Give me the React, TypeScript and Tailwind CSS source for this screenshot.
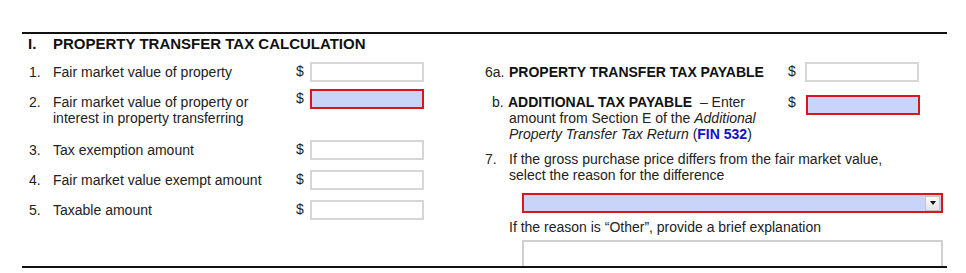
import React from 'react';

const font = { fontFamily: '"Liberation Sans", Arial, sans-serif' };

function Box({ required = false, className = '' }: { required?: boolean; className?: string }) {
  return (
    <div
      className={
        'h-[20px] w-[114px] border-2 ' +
        (required ? 'border-[#dc141c] bg-[#c9d4fb] ' : 'border-[#d6d6d6] bg-white ') +
        className
      }
    />
  );
}

function LeftRow({
  num,
  children,
  required,
  className = '',
  labelPad = 'pt-[2px]',
}: {
  num: string;
  children: React.ReactNode;
  required?: boolean;
  className?: string;
  labelPad?: string;
}) {
  return (
    <div className={'flex items-start ' + className}>
      <div className={'w-[24px] pl-[7px] box-content ' + labelPad}>{num}</div>
      <div className={'w-[243px] ' + labelPad}>{children}</div>
      <div className="w-[14px] pt-[1px]">$</div>
      <Box required={required} />
    </div>
  );
}

export default function App() {
  return (
    <div className="min-h-[273px] w-[966px] bg-white text-[14px] leading-[16px] text-[#222]" style={font}>
      <div className="h-[32px]" />
      <div className="ml-[22px] w-[925px] border-y-2 border-[#111]">
        {/* Section header */}
        <div className="flex pt-[2px] text-[15px] font-bold text-[#111]">
          <span className="w-[25px] pl-[6px] box-content">I.</span>
          <span>PROPERTY TRANSFER TAX CALCULATION</span>
        </div>

        <div className="flex">
          {/* Left column */}
          <div className="w-[448px] pt-[10px]">
            <LeftRow num="1.">Fair market value of property</LeftRow>
            <LeftRow num="2." required className="mt-[7px]" labelPad="pt-[5px]">
              Fair market value of property or
              <br />
              interest in property transferring
            </LeftRow>
            <LeftRow num="3." className="mt-[14px]">Tax exemption amount</LeftRow>
            <LeftRow num="4." className="mt-[10px]">Fair market value exempt amount</LeftRow>
            <LeftRow num="5." className="mt-[10px]">Taxable amount</LeftRow>
          </div>

          {/* Right column */}
          <div className="flex-1 pt-[10px]">
            <div className="flex items-start">
              <div className="w-[24px] pl-[15px] box-content pt-[2px]">6a.</div>
              <div className="w-[279px] pt-[2px] font-bold text-[#111]">PROPERTY TRANSFER TAX PAYABLE</div>
              <div className="w-[17px] pt-[1px]">$</div>
              <Box className="w-[113px]" />
            </div>

            <div className="mt-[12px] flex items-start">
              <div className="w-[24px] pl-[15px] box-content">
                <span className="pl-[7px]">b.</span>
              </div>
              <div className="w-[279px]">
                <span className="-ml-[1px] font-bold text-[#111]">ADDITIONAL TAX PAYABLE</span>
                <span>&nbsp; – Enter</span>
                <br />
                amount from Section E of the <i>Additional</i>
                <br />
                <i>Property Transfer Tax Return</i> (
                <span className="font-bold text-[#1010c8]">FIN 532</span>)
              </div>
              <div className="w-[18px]">$</div>
              <Box required className="mt-[1px] w-[112px]" />
            </div>

            <div className="mt-[9px] flex items-start">
              <div className="w-[24px] pl-[15px] box-content">7.</div>
              <div>
                If the gross purchase price differs from the fair market value,
                <br />
                select the reason for the difference
              </div>
            </div>

            <div className="ml-[52px] mt-[10px] flex h-[20px] w-[421px] items-center justify-end border-2 border-[#dc141c] bg-[#c9d4fb] pr-[1px]">
              <div className="flex h-[15px] w-[15px] items-center justify-center border border-[#c4c4c4] bg-gradient-to-b from-[#fafafa] to-[#e4e4e4]">
                <svg width="6" height="4" viewBox="0 0 6 4">
                  <path d="M0 0h6L3 4z" fill="#111" />
                </svg>
              </div>
            </div>

            <div className="ml-[39px] mt-[6px]">If the reason is “Other”, provide a brief explanation</div>

            <div className="ml-[52px] mt-[5px] h-[26px] w-[421px] border-2 border-b-0 border-[#d0d0d0] bg-white" />
          </div>
        </div>
      </div>
    </div>
  );
}
